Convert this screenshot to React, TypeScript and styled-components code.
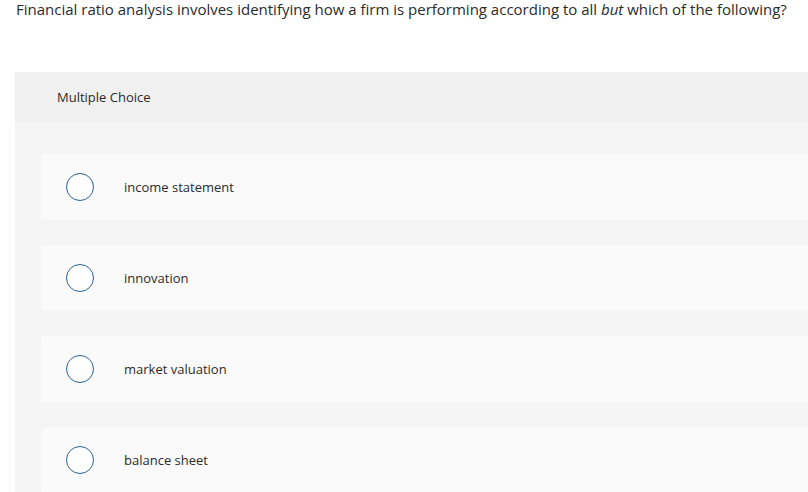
import * as React from "react";
import styled, { createGlobalStyle } from "styled-components";

const options = [
  "income statement",
  "innovation",
  "market valuation",
  "balance sheet"
];

export default function App() {
  return (
    <>
      <GlobalStyle />
      <Page>
        <Question>
          Financial ratio analysis involves identifying how a firm is performing
          according to all <em>but</em> which of the following?
        </Question>
        <Panel>
          <PanelHeader>Multiple Choice</PanelHeader>
          <OptionList>
            {options.map(option => (
              <Option key={option}>
                <Radio />
                <OptionLabel>{option}</OptionLabel>
              </Option>
            ))}
          </OptionList>
        </Panel>
      </Page>
    </>
  );
}

const GlobalStyle = createGlobalStyle`
  html, body {
    margin: 0;
    padding: 0;
    background: #fff;
    overflow: hidden;
  }
  body {
    font-family: "Open Sans", "Liberation Sans", sans-serif;
    color: #2b2b2b;
  }
`;

const Page = styled.div`
  width: 808px;
  height: 492px;
  overflow: hidden;
`;

const Question = styled.p`
  margin: 0;
  padding: 0 0 0 16px;
  font-size: 15px;
  line-height: 19px;
  white-space: nowrap;
  color: #2b2b2b;

  em {
    font-style: italic;
  }
`;

const Panel = styled.div`
  margin: 53px 0 0 15px;
  width: 820px;
`;

const PanelHeader = styled.div`
  height: 50px;
  background: #f0f0f0;
  padding-left: 42px;
  display: flex;
  align-items: center;
  font-size: 13px;
  color: #2b2b2b;
`;

const OptionList = styled.div`
  background: #f5f5f5;
  padding: 32px 0 0 26px;
  display: flex;
  flex-direction: column;
  gap: 25px;
`;

const Option = styled.div`
  height: 66px;
  background: #fafafa;
  border-radius: 3px;
  display: flex;
  align-items: center;
  padding-left: 25px;
`;

const Radio = styled.span`
  box-sizing: border-box;
  width: 28px;
  height: 28px;
  border-radius: 50%;
  border: 1.5px solid #2c5f93;
  background: #fff;
  flex-shrink: 0;
`;

const OptionLabel = styled.span`
  margin-left: 30px;
  font-size: 13px;
  color: #2b2b2b;
`;
